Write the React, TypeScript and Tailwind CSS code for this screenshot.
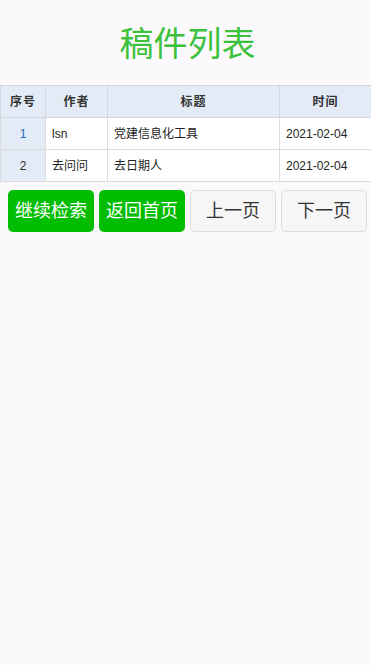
import React from "react";

const rows = [
  { id: "1", author: "lsn", title: "党建信息化工具", time: "2021-02-04", link: true },
  { id: "2", author: "去问问", title: "去日期人", time: "2021-02-04", link: false },
];

export default function App() {
  return (
    <div
      className="min-h-[665px] bg-[#fbf9fc] text-[#222]"
      style={{ fontFamily: '"Liberation Sans", "Noto Sans CJK SC", sans-serif' }}
    >
      <div className="h-[85px] flex items-center justify-center pl-[4px] pt-[2px]">
        <h1 className="text-[34px] leading-none text-[#3cc13c] font-normal">稿件列表</h1>
      </div>
      <table className="w-[372px] border-collapse text-[12px] table-fixed">
        <colgroup>
          <col className="w-[45px]" />
          <col className="w-[62px]" />
          <col className="w-[172px]" />
          <col />
        </colgroup>
        <thead>
          <tr className="h-[32px] bg-[#e3ebf6]">
            <th className="border border-[#d4d8de] font-bold tracking-[1px] text-[#333]">序号</th>
            <th className="border border-[#d4d8de] font-bold tracking-[1px] text-[#333]">作者</th>
            <th className="border border-[#d4d8de] font-bold tracking-[1px] text-[#333]">标题</th>
            <th className="border border-[#d4d8de] font-bold tracking-[1px] text-[#333]">时间</th>
          </tr>
        </thead>
        <tbody>
          {rows.map((r) => (
            <tr key={r.id} className="h-[32px] bg-white">
              <td className={`border border-[#dcdcdc] bg-[#e3ebf6] text-center ${r.link ? "text-[#2d6db5]" : "text-[#333]"}`}>
                {r.id}
              </td>
              <td className="border border-[#dcdcdc] px-[6px]">{r.author}</td>
              <td className="border border-[#dcdcdc] px-[6px]">{r.title}</td>
              <td className="border border-[#dcdcdc] px-[6px]">{r.time}</td>
            </tr>
          ))}
        </tbody>
      </table>
      <div className="flex gap-[5px] px-[8px] mt-[8px]">
        <button className="shrink-0 w-[86px] h-[42px] rounded-[5px] bg-[#02bd02] text-white text-[18px]">继续检索</button>
        <button className="shrink-0 w-[86px] h-[42px] rounded-[5px] bg-[#02bd02] text-white text-[18px]">返回首页</button>
        <button className="shrink-0 w-[86px] h-[42px] rounded-[5px] bg-[#f6f6f6] border border-[#dddddd] text-[#333] text-[18px]">上一页</button>
        <button className="shrink-0 w-[86px] h-[42px] rounded-[5px] bg-[#f6f6f6] border border-[#dddddd] text-[#333] text-[18px]">下一页</button>
      </div>
    </div>
  );
}
